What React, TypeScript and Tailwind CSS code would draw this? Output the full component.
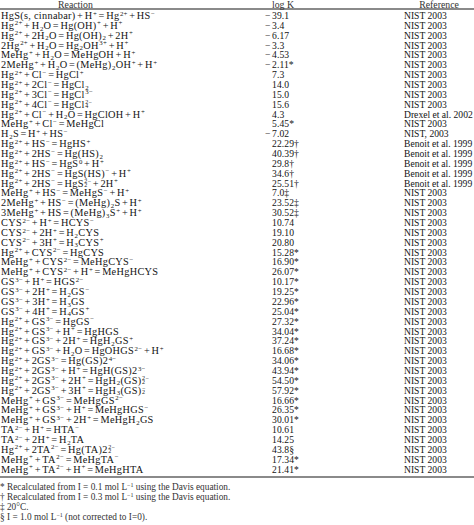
import React from "react";

type Row = [string, string, string];

const rows: Row[] = [
  ["HgS(s, cinnabar)+H^{+}=Hg^{2+}+HS^{−}", "−39.1", "NIST 2003"],
  ["Hg^{2+}+H_{2}O=Hg(OH)^{+}+H^{+}", "−3.4", "NIST 2003"],
  ["Hg^{2+}+2H_{2}O=Hg(OH)_{2}+2H^{+}", "−6.17", "NIST 2003"],
  ["2Hg^{2+}+H_{2}O=Hg_{2}OH^{3+}+H^{+}", "−3.3", "NIST 2003"],
  ["MeHg^{+}+H_{2}O=MeHgOH+H^{+}", "−4.53", "NIST 2003"],
  ["2MeHg^{+}+H_{2}O=(MeHg)_{2}OH^{+}+H^{+}", "−2.11*", "NIST 2003"],
  ["Hg^{2+}+Cl^{−}=HgCl^{+}", "7.3", "NIST 2003"],
  ["Hg^{2+}+2Cl^{−}=HgCl_{2}", "14.0", "NIST 2003"],
  ["Hg^{2+}+3Cl^{−}=HgCl^{3−}", "15.0", "NIST 2003"],
  ["Hg^{2+}+4Cl^{−}=HgCl_{4}^{2−}", "15.6", "NIST 2003"],
  ["Hg^{2+}+Cl^{−}+H_{2}O=HgClOH+H^{+}", "4.3", "Drexel et al. 2002"],
  ["MeHg^{+}+Cl^{−}=MeHgCl", "5.45*", "NIST 2003"],
  ["H_{2}S=H^{+}+HS^{−}", "−7.02", "NIST, 2003"],
  ["Hg^{2+}+HS^{−}=HgHS^{+}", "22.29†", "Benoit et al. 1999"],
  ["Hg^{2+}+2HS^{−}=Hg(HS)_{2}", "40.39†", "Benoit et al. 1999"],
  ["Hg^{2+}+HS^{−}=HgS^{0}+H^{+}", "29.8†", "Benoit et al. 1999"],
  ["Hg^{2+}+2HS^{−}=HgS(HS)^{−}+H^{+}", "34.6†", "Benoit et al. 1999"],
  ["Hg^{2+}+2HS^{−}=HgS_{2}^{2−}+2H^{+}", "25.51†", "Benoit et al. 1999"],
  ["MeHg^{+}+HS^{−}=MeHgS^{−}+H^{+}", "7.0‡", "NIST 2003"],
  ["2MeHg^{+}+HS^{−}=(MeHg)_{2}S+H^{+}", "23.52‡", "NIST 2003"],
  ["3MeHg^{+}+HS=(MeHg)_{3}S^{+}+H^{+}", "30.52‡", "NIST 2003"],
  ["CYS^{2−}+H^{+}=HCYS^{−}", "10.74", "NIST 2003"],
  ["CYS^{2−}+2H^{+}=H_{2}CYS", "19.10", "NIST 2003"],
  ["CYS^{2−}+3H^{+}=H_{3}CYS^{+}", "20.80", "NIST 2003"],
  ["Hg^{2+}+CYS^{2−}=HgCYS", "15.28*", "NIST 2003"],
  ["MeHg^{+}+CYS^{2−}=MeHgCYS^{−}", "16.90*", "NIST 2003"],
  ["MeHg^{+}+CYS^{2−}+H^{+}=MeHgHCYS", "26.07*", "NIST 2003"],
  ["GS^{3−}+H^{+}=HGS^{2−}", "10.17*", "NIST 2003"],
  ["GS^{3−}+2H^{+}=H_{2}GS^{−}", "19.25*", "NIST 2003"],
  ["GS^{3−}+3H^{+}=H_{3}GS", "22.96*", "NIST 2003"],
  ["GS^{3−}+4H^{+}=H_{4}GS^{+}", "25.04*", "NIST 2003"],
  ["Hg^{2+}+GS^{3−}=HgGS^{−}", "27.32*", "NIST 2003"],
  ["Hg^{2+}+GS^{3−}+H^{+}=HgHGS", "34.04*", "NIST 2003"],
  ["Hg^{2+}+GS^{3−}+2H^{+}=HgH_{2}GS^{+}", "37.24*", "NIST 2003"],
  ["Hg^{2+}+GS^{3−}+H_{2}O=HgOHGS^{2−}+H^{+}", "16.68*", "NIST 2003"],
  ["Hg^{2+}+2GS^{3−}=Hg(GS)2^{4−}", "34.06*", "NIST 2003"],
  ["Hg^{2+}+2GS^{3−}+H^{+}=HgH(GS)2^{3−}", "43.94*", "NIST 2003"],
  ["Hg^{2+}+2GS^{3−}+2H^{+}=HgH_{2}(GS)_{2}^{2−}", "54.50*", "NIST 2003"],
  ["Hg^{2+}+2GS^{3−}+3H^{+}=HgH_{3}(GS)_{2}^{−}", "57.92*", "NIST 2003"],
  ["MeHg^{+}+GS^{3−}=MeHgGS^{2−}", "16.66*", "NIST 2003"],
  ["MeHg^{+}+GS^{3−}+H^{+}=MeHgHGS^{−}", "26.35*", "NIST 2003"],
  ["MeHg^{+}+GS^{3−}+2H^{+}=MeHgH_{2}GS", "30.01*", "NIST 2003"],
  ["TA^{2−}+H^{+}=HTA^{−}", "10.61", "NIST 2003"],
  ["TA^{2−}+2H^{+}=H_{2}TA", "14.25", "NIST 2003"],
  ["Hg^{2+}+2TA^{2−}=Hg(TA)2_{2}^{2−}", "43.8§", "NIST 2003"],
  ["MeHg^{+}+TA^{2−}=MeHgTA^{−}", "17.34*", "NIST 2003"],
  ["MeHg^{+}+TA^{2−}+H^{+}=MeHgHTA", "21.41*", "NIST 2003"],
];

function Plain({ t }: { t: string }) {
  const bits = t.split(/([+=])/).filter((b) => b !== "");
  return (
    <>
      {bits.map((b, j) =>
        b === "+" || b === "=" ? (
          <span key={j} className="mx-[1.5px]">
            {b}
          </span>
        ) : (
          <span key={j}>{b}</span>
        )
      )}
    </>
  );
}

function Chem({ s }: { s: string }) {
  const parts = s.split(/(_\{[^}]*\}\^\{[^}]*\}|\^\{[^}]*\}|_\{[^}]*\})/).filter((p) => p !== "");
  return (
    <>
      {parts.map((p, i) => {
        const stacked = p.match(/^_\{([^}]*)\}\^\{([^}]*)\}$/);
        if (stacked) {
          return (
            <span
              key={i}
              className="inline-flex flex-col align-middle text-[6px] leading-[4.5px] relative top-[-1px] ml-[0.5px]"
            >
              <span>{stacked[2]}</span>
              <span>{stacked[1]}</span>
            </span>
          );
        }
        if (p.startsWith("^{")) {
          return (
            <sup key={i} className="text-[6.8px] ml-[0.5px]">
              {p.slice(2, -1)}
            </sup>
          );
        }
        if (p.startsWith("_{")) {
          return (
            <sub key={i} className="text-[6.8px] ml-[0.5px]">
              {p.slice(2, -1)}
            </sub>
          );
        }
        return <Plain key={i} t={p} />;
      })}
    </>
  );
}

function Value({ v }: { v: string }) {
  if (v.startsWith("−")) {
    return (
      <span>
        <span className="inline-block w-[7px] ml-[-7px]">−</span>
        {v.slice(1)}
      </span>
    );
  }
  return <span>{v}</span>;
}

export default function App() {
  return (
    <div
      className="w-[474px] h-[525px] bg-white text-[#141414] overflow-hidden"
      style={{ fontFamily: '"Liberation Serif", "Times New Roman", serif' }}
    >
      <div className="grid grid-cols-[272px_132px_1fr] h-[10px] leading-[9px] text-[9.8px] text-[#333] border-b-2 border-[#8a8a8a]">
        <div className="pl-[58px]">Reaction</div>
        <div>log K</div>
        <div className="text-center">Reference</div>
      </div>
      <div className="pt-[1px] pb-[2px] border-b-2 border-[#8a8a8a] text-[9.6px]">
        {rows.map(([r, v, ref], i) => (
          <div key={i} className="grid grid-cols-[272px_132px_1fr] h-[9.86px] leading-[9.86px] whitespace-nowrap">
            <div className="pl-[1px] text-[10.3px] tracking-[0.3px]">
              <Chem s={r} />
            </div>
            <div className="tracking-[0.1px]">
              <Value v={v} />
            </div>
            <div className="overflow-hidden">{ref}</div>
          </div>
        ))}
      </div>
      <div className="pt-[4px] text-[9.3px] leading-[10px] text-[#333]">
        <div>
          * Recalculated from I = 0.1 mol L<sup className="text-[6px]">−1</sup> using the Davis equation.
        </div>
        <div>
          † Recalculated from I = 0.3 mol L<sup className="text-[6px]">−1</sup> using the Davis equation.
        </div>
        <div>‡ 20°C.</div>
        <div>
          § I = 1.0 mol L<sup className="text-[6px]">−1</sup> (not corrected to I=0).
        </div>
      </div>
    </div>
  );
}
